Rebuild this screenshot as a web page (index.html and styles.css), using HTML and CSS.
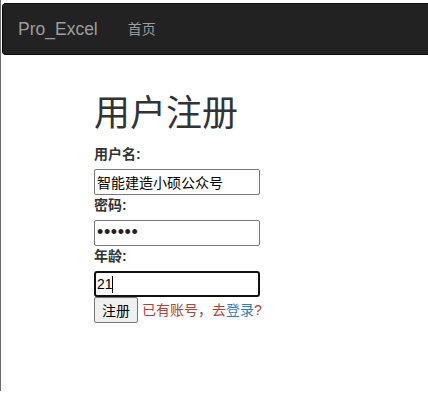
FILE: index.html
```html
<!DOCTYPE html>
<html lang="zh-CN">
<head>
<meta charset="utf-8">
<title>用户注册</title>
<link rel="stylesheet" href="styles.css">
</head>
<body>
<nav class="navbar">
  <a class="brand" href="#">Pro_Excel</a>
  <a class="nav-link" href="#">首页</a>
</nav>
<main class="main">
  <h1 class="title">用户注册</h1>
  <form class="form">
    <label class="label">用户名:</label>
    <input class="field" type="text" value="智能建造小硕公众号">
    <label class="label">密码:</label>
    <input class="field pass" type="password" value="123456">
    <label class="label">年龄:</label>
    <span class="field-wrap">
      <input class="field focused" type="text" value="21">
      <span class="caret"></span>
    </span>
    <div class="actions">
      <button class="btn" type="button">注册</button>
      <span class="hint">已有账号，去<a class="login" href="#">登录</a>?</span>
    </div>
  </form>
</main>
</body>
</html>
```

FILE: styles.css
```css
html, body {
  margin: 0;
  padding: 0;
  background: #fff;
}
body {
  font-family: "Liberation Sans", "Noto Sans CJK SC", sans-serif;
  font-size: 14px;
  line-height: 20px;
  color: #333;
  padding-top: 3px;
  border-left: 1px solid #6b6b6b;
  min-height: 391px;
  box-sizing: border-box;
  overflow: hidden;
}
.navbar {
  display: flex;
  align-items: stretch;
  height: 50px;
  background: #222;
  border: 1px solid #080808;
  border-right: 0;
  border-radius: 4px 0 0 4px;
  margin: 0 0 20px 1px;
}
.brand {
  display: block;
  padding: 15px;
  font-size: 17.5px;
  line-height: 20px;
  color: #9d9d9d;
  text-decoration: none;
}
.nav-link {
  display: block;
  padding: 15px;
  line-height: 20px;
  color: #9d9d9d;
  text-decoration: none;
}
.main {
  margin-left: 93px;
}
.title {
  margin: 39px 0 10px;
  font-size: 36px;
  font-weight: 400;
  line-height: 1.1;
  color: #333;
}
.form {
  display: flex;
  flex-direction: column;
  align-items: flex-start;
}
.label {
  display: block;
  font-weight: bold;
  margin-bottom: 5px;
}
.field-wrap {
  position: relative;
  display: block;
}
.field {
  display: block;
  width: 166px;
  height: 26px;
  box-sizing: border-box;
  border: 1px solid #767676;
  border-radius: 2px;
  padding: 1px 2px;
  font-family: "Liberation Sans", "Noto Sans CJK SC", sans-serif;
  font-size: 14px;
  color: #000;
  background: #fff;
  margin: 0;
}
.field.pass {
  font-size: 18px;
  letter-spacing: 0.6px;
  color: #222;
}
.field.focused {
  border: 2px solid #101010;
  border-radius: 3px;
  padding: 0 1px;
  outline: none;
}
.caret {
  position: absolute;
  left: 18px;
  top: 5px;
  width: 1px;
  height: 17px;
  background: #000;
}
.actions {
  display: flex;
  align-items: center;
  gap: 4px;
}
.btn {
  height: 26px;
  padding: 1px 7px;
  border: 1px solid #767676;
  border-radius: 2px;
  background: #efefef;
  font-family: "Liberation Sans", "Noto Sans CJK SC", sans-serif;
  font-size: 14px;
  color: #000;
  margin: 0;
}
.hint {
  color: #a94442;
}
.login {
  color: #337ab7;
  text-decoration: none;
}
```
